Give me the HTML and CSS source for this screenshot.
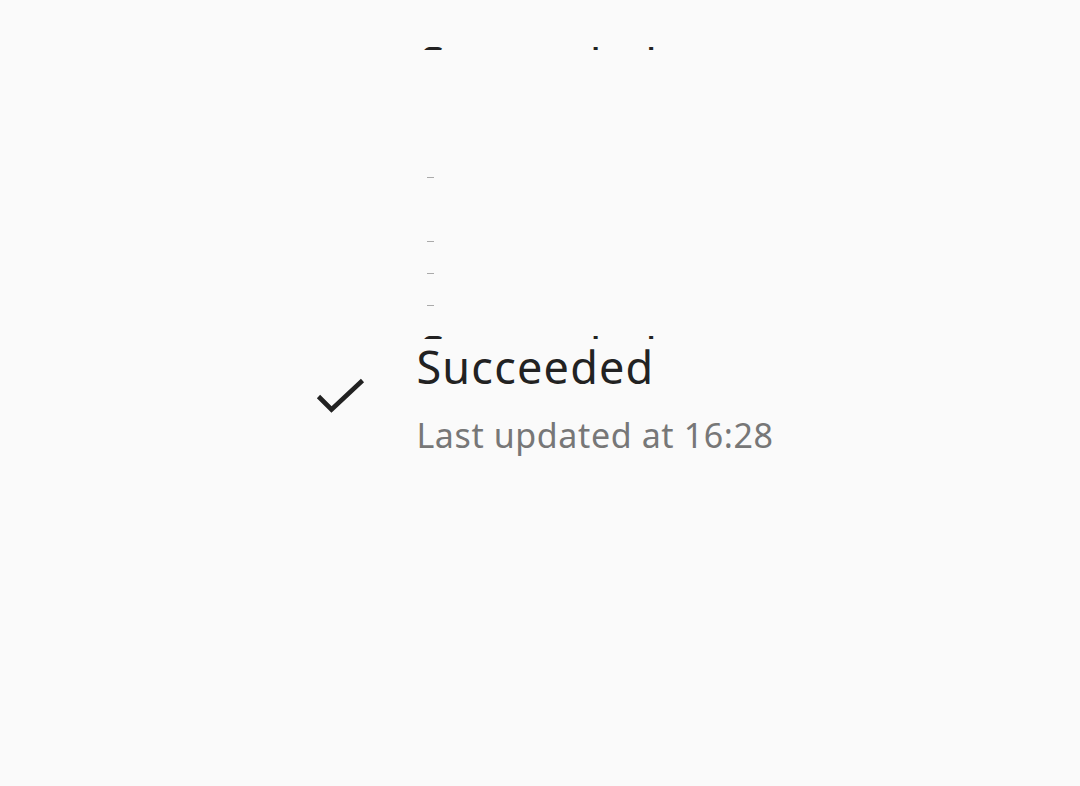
FILE: index.html
```html
<!DOCTYPE html>
<html>
<head>
<meta charset="utf-8">
<link rel="stylesheet" href="styles.css">
</head>
<body>
<div class="ghost ghost-top"><span>Succeeded</span></div>
<div class="ghost ghost-faint g1"><span>S</span></div>
<div class="ghost ghost-faint g2"><span>S</span></div>
<div class="ghost ghost-faint g3"><span>S</span></div>
<div class="ghost ghost-faint g4"><span>S</span></div>
<div class="ghost ghost-mid"><span>Succeeded</span></div>
<main class="screen">
  <div class="status">
    <svg class="check" width="50" height="40" viewBox="0 0 50 40">
      <path d="M2.5 19.5 L15.5 32.5 L46.5 3.5" fill="none" stroke="#222" stroke-width="4.6"/>
    </svg>
    <div class="texts">
      <div class="title">Succeeded</div>
      <div class="sub">Last updated at 16:28</div>
    </div>
  </div>
</main>
</body>
</html>
```
FILE: styles.css
```css
html, body {
  margin: 0;
  padding: 0;
  background: #fafafa;
  width: 1080px;
  height: 786px;
  overflow: hidden;
  font-family: "Noto Sans", "Open Sans", sans-serif;
}
.screen {
  height: 786px;
  display: flex;
  align-items: center;
  justify-content: center;
}
.status {
  display: flex;
  align-items: center;
  gap: 50px;
  margin-top: 9px;
  margin-left: 10px;
}
.check {
  display: block;
  margin-top: -2px;
}
.texts {
  display: flex;
  flex-direction: column;
  gap: 18px;
}
.title {
  font-size: 45px;
  line-height: 56px;
  color: #222;
  letter-spacing: 1.2px;
}
.sub {
  font-size: 34px;
  line-height: 44px;
  color: #777;
  letter-spacing: 0.6px;
}
.ghost {
  position: absolute;
  left: 420px;
  height: 3px;
  overflow: hidden;
  font-size: 45px;
  line-height: 56px;
  color: #222;
  letter-spacing: 1.2px;
}
.ghost span {
  display: block;
  margin-top: -12px;
}
.ghost-top { top: 47px; }
.ghost-mid { top: 336px; }
.ghost-faint {
  left: 427px;
  height: 1px;
  color: #aaa;
  width: 7px;
}
.ghost-faint span {
  margin-top: -13px;
  margin-left: -7px;
}
.g1 { top: 177px; }
.g2 { top: 241px; }
.g3 { top: 273px; }
.g4 { top: 305px; }
```
